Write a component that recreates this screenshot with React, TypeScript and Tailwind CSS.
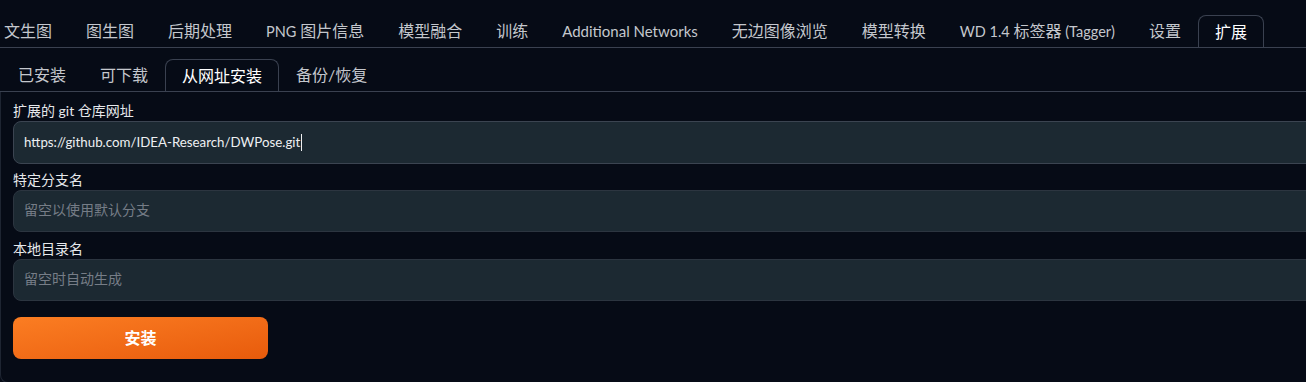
import React from "react";

type TabDef = { key: string; node: React.ReactNode };

const L = ({ children }: { children: React.ReactNode }) => (
  <span className="text-[15px]">{children}</span>
);

const topTabs: TabDef[] = [
  { key: "t2i", node: "文生图" },
  { key: "i2i", node: "图生图" },
  { key: "post", node: "后期处理" },
  { key: "png", node: <><span className="text-[14.5px]">PNG </span>图片信息</> },
  { key: "merge", node: "模型融合" },
  { key: "train", node: "训练" },
  { key: "an", node: <L>Additional Networks</L> },
  { key: "browser", node: "无边图像浏览" },
  { key: "convert", node: "模型转换" },
  { key: "wd", node: <><span className="text-[14.5px]">WD 1.4 </span>标签器<span className="text-[14.5px]"> (Tagger)</span></> },
  { key: "settings", node: "设置" },
  { key: "ext", node: "扩展" },
];

const subTabs: TabDef[] = [
  { key: "installed", node: "已安装" },
  { key: "available", node: "可下载" },
  { key: "url", node: "从网址安装" },
  { key: "backup", node: "备份/恢复" },
];

function Tab({ node, active }: { node: React.ReactNode; active: boolean }) {
  return active ? (
    <div className="h-[32px] px-[16px] flex items-center whitespace-nowrap text-[16px] text-white border border-b-0 border-[#3a4150] rounded-t-[8px] bg-[#060b16] mb-[-1px] relative">
      <span>{node}</span>
    </div>
  ) : (
    <div className="h-[32px] px-[17px] flex items-center whitespace-nowrap text-[16px] text-[#c4c7cd]">
      <span>{node}</span>
    </div>
  );
}

function Field({
  label,
  value,
  placeholder,
  focused,
}: {
  label: string;
  value?: string;
  placeholder?: string;
  focused?: boolean;
}) {
  return (
    <div className="flex flex-col">
      <div className="h-[18px] leading-[18px] text-[14px] text-[#e6e8eb]">{label}</div>
      <div
        className={
          focused
            ? "mt-[1px] h-[43px] rounded-[8px] bg-[#1c2932] border border-[#3b4451] px-[10px] flex items-center text-[14px]"
            : "mt-[1px] h-[42px] rounded-[8px] bg-[#1c2932] border border-[#2c3540] px-[10px] flex items-center text-[14px]"
        }
      >
        {value ? (
          <span className="text-[#eef0f2] text-[13.3px] flex items-center">
            {value}
            <span className="inline-block w-px h-[17px] bg-[#eef0f2] ml-px" />
          </span>
        ) : (
          <span className="text-[#767d87] -mt-[3px]">{placeholder}</span>
        )}
      </div>
    </div>
  );
}

export default function App() {
  return (
    <div
      className="w-[1306px] h-[382px] overflow-hidden bg-[#060b16]"
      style={{ fontFamily: 'Lato, "Noto Sans CJK SC", sans-serif' }}
    >
      <div className="pt-[15px] border-b border-[#3a4150] w-[1306px]">
        <div className="flex -ml-[13px]">
          {topTabs.map((t) => (
            <Tab key={t.key} node={t.node} active={t.key === "ext"} />
          ))}
        </div>
      </div>
      <div className="mt-[11px] border-b border-[#3a4150] w-[1306px]">
        <div className="flex ml-px">
          {subTabs.map((t) => (
            <Tab key={t.key} node={t.node} active={t.key === "url"} />
          ))}
        </div>
      </div>
      <div className="w-[1340px] h-[291px] border-l border-b border-[#1e2532] rounded-bl-[8px] pl-[12px] pt-[10px] flex flex-col">
        <Field
          label="扩展的 git 仓库网址"
          value="https://github.com/IDEA-Research/DWPose.git"
          focused
        />
        <div className="mt-[7px]">
          <Field label="特定分支名" placeholder="留空以使用默认分支" />
        </div>
        <div className="mt-[8px]">
          <Field label="本地目录名" placeholder="留空时自动生成" />
        </div>
        <button className="mt-[16px] w-[255px] h-[42px] rounded-[8px] bg-gradient-to-br from-[#fb7d22] to-[#e85b0b] text-white font-bold text-[16px] flex items-center justify-center">
          安装
        </button>
      </div>
    </div>
  );
}
